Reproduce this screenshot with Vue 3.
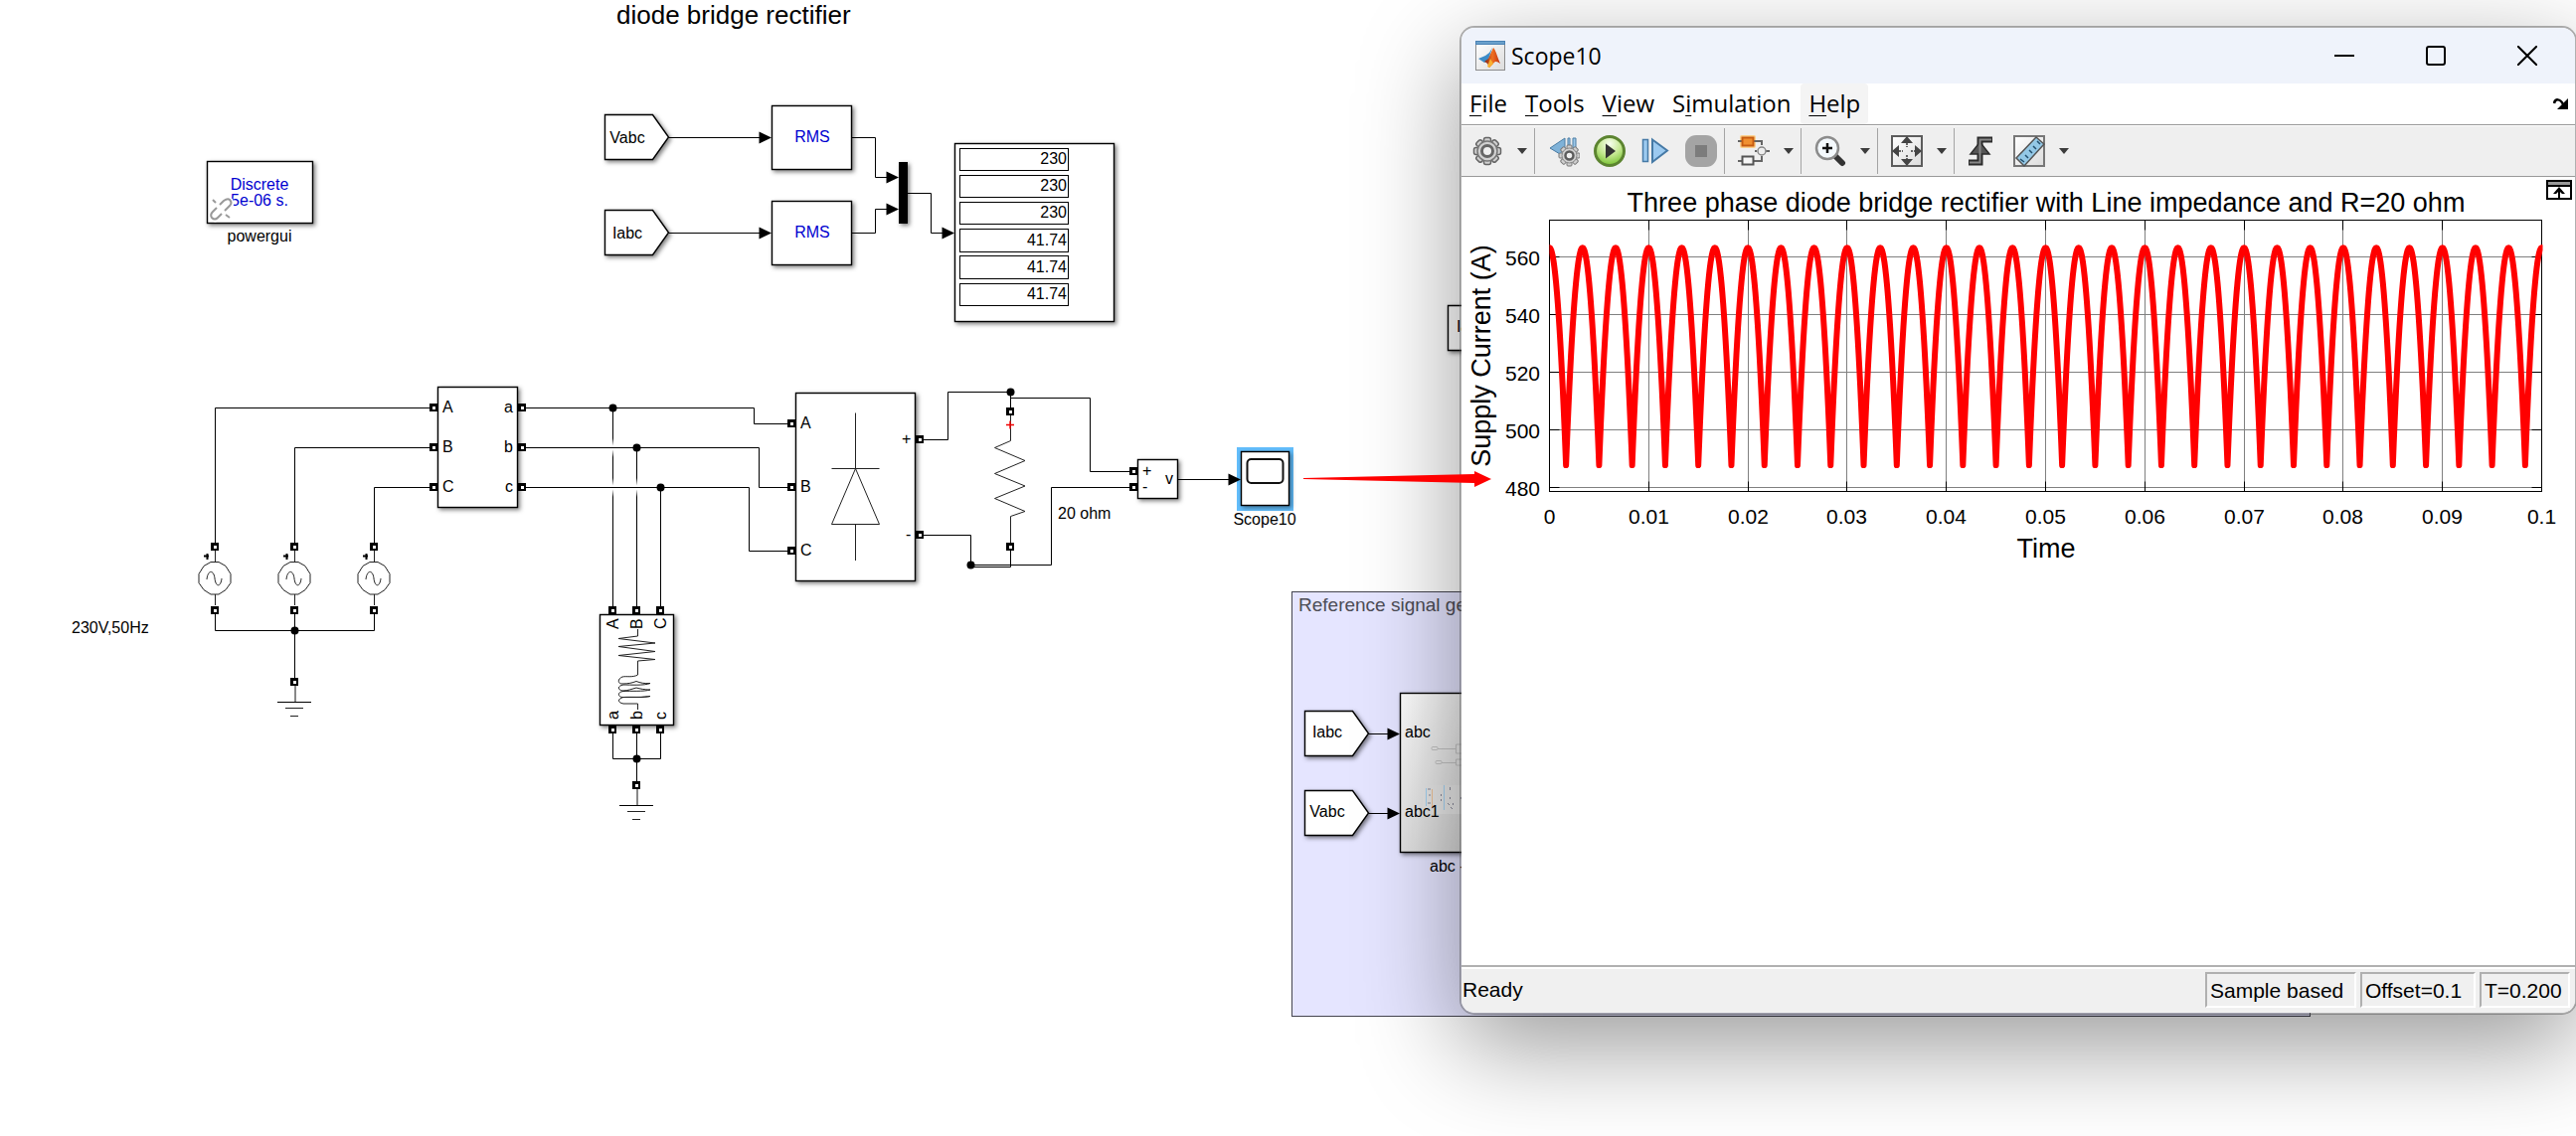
<script setup>
const blocks = [
  { x: 208, y: 162, w: 106, h: 62 },
  { x: 776, y: 106, w: 80, h: 64 },
  { x: 776, y: 202, w: 80, h: 64 },
  { x: 960, y: 144, w: 160, h: 179 },
  { x: 440, y: 389, w: 80, h: 121 },
  { x: 800, y: 395, w: 120, h: 189 },
  { x: 603, y: 618, w: 74, h: 111 },
  { x: 1144, y: 462, w: 40, h: 39 },
]

const tags = [
  { x: 608, y: 115, label: 'Vabc', tx: 631, ty: 144 },
  { x: 608, y: 211, label: 'Iabc', tx: 631, ty: 240 },
  { x: 1312, y: 715, label: 'Iabc', tx: 1335, ty: 742 },
  { x: 1312, y: 795, label: 'Vabc', tx: 1335, ty: 822 },
  { x: 1456, y: 307, label: 'Iabc', tx: 1480, ty: 334 },
]
const tagShape = (t) => `M${t.x + 0.5} ${t.y + 0.5}h48l16 22.5l-16 22.5h-48z`

const readings = [
  { y: 149, h: 22, v: '230', ty: 165 },
  { y: 176, h: 22, v: '230', ty: 192 },
  { y: 203, h: 22, v: '230', ty: 219 },
  { y: 230, h: 23, v: '41.74', ty: 247 },
  { y: 257, h: 23, v: '41.74', ty: 274 },
  { y: 285, h: 22, v: '41.74', ty: 301 },
]

const wires = [
  'M672 138.5H764', 'M672 234.5H764',
  'M857 138.5H880.5V178.5H892', 'M857 234.5H880.5V210.5H892',
  'M913 194.5H936.5V234.5H948',
  'M216.5 546V410.5H433', 'M296.5 546V450.5H433', 'M376.5 546V490.5H433',
  'M216.5 618V634.5H376.5V618', 'M296.5 618V682',
  'M528 410.5H758.5V426.5H793', 'M528 450.5H763.5V490.5H793', 'M528 490.5H753.5V554.5H793',
  'M664.5 490.5V610',
  'M616.5 738V763.5H664.5V738', 'M640.5 738V786',
  'M928 442.5H953.5V394.5H1016.5V410', 'M1016.5 400.5H1096.5V474.5H1137',
  'M928 538.5H976.5V568.5H1057.5V490.5H1137', 'M1016.5 554V570.5H976.5',
  'M1185 482.5H1236', 'M1376 738.5H1396', 'M1376 818.5H1396',
]

const arrows = [[776, 138], [776, 234], [904, 178], [904, 210], [960, 234], [1408, 738], [1408, 818]]
const dots = [[296.5, 634.5], [616.5, 410.5], [640.5, 450.5], [664.5, 490.5], [640.5, 763.5], [1016.5, 394.5], [976.5, 568.5]]

const ports = [
  [432, 406], [432, 446], [432, 486], [521, 406], [521, 446], [521, 486],
  [212, 546], [292, 546], [372, 546], [212, 610], [292, 610], [372, 610], [292, 682],
  [792, 422], [792, 486], [792, 550], [921, 438], [921, 534],
  [612, 610], [636, 610], [660, 610], [612, 730], [636, 730], [660, 730], [636, 786],
  [1012, 410], [1012, 546], [1136, 470], [1136, 486],
]

const labels = [
  [445, 415, 'A'], [445, 455, 'B'], [445, 495, 'C'], [507, 415, 'a'], [507, 455, 'b'], [508, 495, 'c'],
  [805, 431, 'A'], [805, 495, 'B'], [805, 559, 'C'], [907, 447, '+'], [911, 543, '-'],
  [1149, 479, '+'], [1149, 495, '-'], [1172, 487, 'v'],
  [72, 637, '230V,50Hz'], [1064, 522, '20 ohm'],
]
const sideLabels = [[622, 633, 'A'], [646, 633, 'B'], [670, 633, 'C'], [622, 724, 'a'], [646, 724, 'b'], [670, 724, 'c']]
const sources = [216, 296, 376]
const grounds = [[296, 690], [640, 794]]

const menus = [
  ['', 'F', 'ile'], ['', 'T', 'ools'], ['', 'V', 'iew'], ['S', 'i', 'mulation'], ['', 'H', 'elp'],
]
const toolGroups = [
  { icons: ['gear'], menu: true },
  { icons: ['setup', 'play', 'step', 'stop'], menu: false },
  { icons: ['signals'], menu: true },
  { icons: ['zoom'], menu: true },
  { icons: ['fit'], menu: true },
  { icons: ['trigger', 'ruler'], menu: true },
]
const toolNames = {
  gear: 'Configuration', setup: 'Stepping options', play: 'Run', step: 'Step forward', stop: 'Stop',
  signals: 'Signal selector', zoom: 'Zoom in', fit: 'Scale axes', trigger: 'Triggers', ruler: 'Measurements',
}
const gearTeeth = Array.from({ length: 8 }, (_, i) => i * 45)

// Plot geometry in the chart's own units
const left = 88.5
const right = 1086.5
const top = 43.5
const bottom = 316.5
const step = (right - left) / 10
const xTicks = Array.from({ length: 11 }, (_, i) => ({
  x: Math.round(left + i * step - 0.5) + 0.5,
  label: i === 0 ? '0' : i === 10 ? '0.1' : '0.0' + i,
}))
const yTicks = [560, 540, 520, 500, 480].map((v, i) => ({ v, y: 80.5 + i * 58 }))

// Six-pulse rectified voltage: tops of a cosine, 60 degrees per pulse
const points = []
for (let i = 0; i <= 1200; i++) {
  const phase = (i / 1200) * 30
  const angle = (phase - Math.round(phase)) * (Math.PI / 3)
  const volts = 563.2 * Math.cos(angle)
  points.push(`${(left + (i / 1200) * (right - left)).toFixed(2)},${(80.5 - (volts - 560) * 2.9).toFixed(2)}`)
}
const trace = points.join(' ')
</script>

<template>
  <main class="desktop">
    <svg class="canvas" role="img" aria-label="Diode bridge rectifier model">
      <defs>
        <linearGradient id="hop" x1="0" y1="0" x2="0" y2="1">
          <stop offset="0" stop-color="#fff" stop-opacity="0" />
          <stop offset=".4" stop-color="#fff" />
          <stop offset=".6" stop-color="#fff" />
          <stop offset="1" stop-color="#fff" stop-opacity="0" />
        </linearGradient>
        <linearGradient id="sub" x1="0" y1="0" x2="1" y2="1">
          <stop offset="0" stop-color="#fff" />
          <stop offset="1" stop-color="#c4c4c4" />
        </linearGradient>
      </defs>

      <rect class="area" x="1299.5" y="595.5" width="1024" height="427" />
      <text class="area-title" x="1306" y="615">Reference signal generation</text>

      <path class="wire" d="M616.5 410.5V610M640.5 450.5V610" />
      <rect x="614" y="441" width="5" height="19" fill="url(#hop)" />
      <rect x="614" y="481" width="5" height="19" fill="url(#hop)" />
      <rect x="638" y="481" width="5" height="19" fill="url(#hop)" />
      <path v-for="d in wires" :key="d" class="wire" :d="d" />

      <g class="solid">
        <rect v-for="b in blocks" :key="b.x + '-' + b.y" :x="b.x + 0.5" :y="b.y + 0.5" :width="b.w" :height="b.h" />
        <path v-for="t in tags" :key="t.x + '-' + t.y" :d="tagShape(t)" />
        <rect x="1408.5" y="697.5" width="160" height="160" fill="url(#sub)" />
      </g>
      <rect class="mux" x="904" y="163" width="9" height="62" />

      <text v-for="t in tags" :key="'l' + t.x + t.y" class="mid" :x="t.tx" :y="t.ty">{{ t.label }}</text>

      <text class="heading" x="620" y="24">diode bridge rectifier</text>
      <text class="mid blue" x="817" y="143">RMS</text>
      <text class="mid blue" x="817" y="239">RMS</text>
      <text class="mid blue" x="261" y="191">Discrete</text>
      <text class="mid blue" x="261" y="207">5e-06 s.</text>
      <g class="link">
        <path class="halo" d="M221 207l5-5q4-3 6 0q2 3-1 6l-5 5M218 210l-4 4q-3 3 0 6q3 2 6-1l4-4" />
        <path d="M221 206l4-4q4-3 6-1q3 3 0 6l-5 5M218 209l-4 4q-3 3-1 6q3 3 6 0l4-4M214 201l3 3M227 216l4 3" />
      </g>
      <text class="mid" x="261" y="243">powergui</text>

      <g v-for="r in readings" :key="r.y">
        <rect class="cell" x="965.5" :y="r.y + 0.5" width="109" :height="r.h" />
        <text class="end" x="1073" :y="r.ty">{{ r.v }}</text>
      </g>

      <path v-for="a in arrows" :key="a.join()" :d="`M${a[0]} ${a[1] + 0.5}l-12.500-6v12z`" />
      <circle v-for="d in dots" :key="d.join()" :cx="d[0]" :cy="d[1]" r="4" />

      <g v-for="x in sources" :key="x" class="thin">
        <path :d="`M${x + 0.5} 554V565M${x + 0.5} 598V609`" />
        <path :d="`M${x - 4} 565.500h8l7 4l5 8v9l-5 7l-7 4.500h-8l-7-4.500l-5-7v-9l5-8z`" />
        <path :d="`M${x - 8} 583c1-10 7-10 8-1c1 9 6 9 7 0`" />
        <path :d="`M${x - 11} 559.500h5M${x - 7.5} 557v6`" class="bold" />
      </g>

      <g v-for="g in grounds" :key="g.join()">
        <path class="stem" :d="`M${g[0] + 1} ${g[1]}v16`" />
        <path class="wire" :d="`M${g[0] - 17} ${g[1] + 16.5}h34`" />
        <path class="thin" :d="`M${g[0] - 9} ${g[1] + 22.5}h18M${g[0] - 4} ${g[1] + 30.5}h8`" />
      </g>

      <path class="thin" d="M860.500 415.500V471.500M836.500 471.500H884.500M860.500 471.500L836.500 527.500H884.500ZM860.500 527.500V564" />
      <path class="thin" d="M641.500 633V640L622 642.500L659 647L622 650.500L659 655.500L622 659.500L659 663.500L641.500 665V679C636 682 630 680 626 681C621 683 621 688 626 688C632 688 636 687 640 685.500C644 687 648 688 654 687.500C648 690 634 689 627 689C621 690 621 694 626 695C632 695 636 693 640 692C644 693 648 694 654 694C648 696 634 695 627 695.500C621 696 621 701 626 701.500H645L654 700.500C648 702 634 701 627 701.500C621 703 621 707 627 708H641.500V714" />
      <path class="thin" d="M1016.500 418V443.500L1000.500 450.500L1031 463.500L1000.500 476.500L1031 489L1000.500 501.500L1031 514.500L1016.500 519.500V546" />
      <path class="plus" d="M1012 427.500h8M1016 423.500v8" />

      <g v-for="p in ports" :key="p.join()">
        <rect :x="p[0]" :y="p[1]" width="8" height="8" />
        <rect :x="p[0] + 3" :y="p[1] + 3" width="3" height="3" fill="#fff" />
      </g>

      <text v-for="l in labels" :key="l.join()" :x="l[0]" :y="l[1]">{{ l[2] }}</text>
      <text v-for="l in sideLabels" :key="l.join()" :transform="`translate(${l[0]} ${l[1]}) rotate(-90)`">{{ l[2] }}</text>

      <rect x="1244" y="450" width="57" height="64" fill="#62bdfb" />
      <rect class="scope" x="1248.5" y="454.500" width="48" height="54" />
      <rect class="screen" x="1254.500" y="462" width="36" height="24" rx="4" />
      <path d="M1248 482.500l-12.500-6v12z" />
      <text class="mid" x="1272" y="528">Scope10</text>

      <text x="1413" y="742">abc</text>
      <g class="preview">
        <rect x="1440" y="751.500" width="6" height="3" rx="1" />
        <path d="M1446 753.500H1464M1450 767.500H1464M1464.500 749v9h8v-9zM1464.500 764v6h8v-6z" />
        <rect x="1444" y="765.500" width="6" height="3" rx="1" />
        <rect class="sheet" x="1431" y="790" width="40" height="29" />
        <path d="M1434.500 793v18M1452.500 790v25" stroke="#a4d4f4" />
        <path d="M1440.500 794v19" stroke="#f0c498" />
        <path class="specks" d="M1436 794h3M1437 800h2M1436 808h3M1449.500 799v2M1449.500 804v2M1458.500 792v3M1458.500 802v2M1456 808l2 2M1459 812l2 2M1461.500 808v2M1469.500 802v2" />
      </g>
      <text x="1413" y="822">abc1</text>
      <text x="1438" y="877">abc - dq</text>
    </svg>

    <section class="window" aria-label="Scope10">
      <header class="titlebar">
        <svg class="app-icon" viewBox="0 0 30 30" aria-hidden="true">
          <defs>
            <linearGradient id="paper" x1="0" y1="0" x2="1" y2="1">
              <stop offset="0" stop-color="#fff" /><stop offset="1" stop-color="#dcdcdc" />
            </linearGradient>
            <linearGradient id="peak" x1="0" y1="0" x2="1" y2="0">
              <stop offset="0" stop-color="#7c1c14" /><stop offset=".5" stop-color="#f07020" /><stop offset="1" stop-color="#c03010" />
            </linearGradient>
          </defs>
          <rect x=".5" y=".5" width="29" height="29" fill="url(#paper)" stroke="#8c8c8c" />
          <rect x="0" y="0" width="30" height="4" fill="#4a82b4" />
          <path d="M1 2h28" stroke="#8cc0e4" />
          <path d="M3 18l7-3l4-3l3-5l-4 12l-4 3z" fill="#3c8cc8" />
          <path d="M9 21l4-3l5-11c2 1 4 9 7 16c-3-2-5-3-7 0l-4 4c-1-3-2-5-5-6z" fill="url(#peak)" />
          <path d="M12 26l3-8l3 5l-4 4z" fill="#f8b030" />
        </svg>
        <h1>Scope10</h1>
        <div class="controls">
          <button type="button" aria-label="Minimize"><svg viewBox="0 0 20 20"><path d="M0 10h20" /></svg></button>
          <button type="button" aria-label="Maximize"><svg viewBox="0 0 20 20"><rect x="1" y="1" width="18" height="18" rx="2" /></svg></button>
          <button type="button" aria-label="Close"><svg viewBox="0 0 20 20"><path d="M0 0L20 20M20 0L0 20" /></svg></button>
        </div>
      </header>

      <nav class="menubar">
        <button v-for="m in menus" :key="m[2]" type="button" :class="{ hot: m[2] === 'elp' }">{{ m[0] }}<u>{{ m[1] }}</u>{{ m[2] }}</button>
        <svg class="dock" viewBox="0 0 16 12" aria-hidden="true">
          <path d="M1 5C2 0 7 0 10 6" fill="none" stroke="#000" stroke-width="2.500" />
          <path d="M15 0V11H4Z" />
        </svg>
      </nav>

      <div class="toolbar" role="toolbar" aria-label="Scope tools">
        <div v-for="g in toolGroups" :key="g.icons[0]" class="group">
          <button v-for="n in g.icons" :key="n" type="button" class="tool" :aria-label="toolNames[n]" :disabled="n === 'stop'">
            <svg v-if="n === 'gear'" viewBox="0 0 32 32">
              <g fill="#d0d0d0" stroke="#666" stroke-width="1.500"><rect v-for="a in gearTeeth" :key="a" x="12.500" y="2.500" width="7" height="8" rx="2" :transform="`rotate(${a} 16 16)`" /></g>
              <circle cx="16" cy="16" r="10" fill="#d0d0d0" stroke="#777" stroke-width="1.500" />
              <circle cx="16" cy="16" r="5.500" fill="#efefef" stroke="#666" stroke-width="3" />
            </svg>
            <svg v-else-if="n === 'setup'" viewBox="0 0 32 32">
              <path d="M17 3V22L2 13Z" fill="#7fb2d8" stroke="#4a7ca4" />
              <path d="M20 3h2v10h-2zM25 3h3v10h-3z" fill="#9cc8e8" stroke="#4a7ca4" />
              <g fill="#d0d0d0" stroke="#777"><rect v-for="a in gearTeeth" :key="a" x="19" y="10" width="5" height="6" rx="1" :transform="`rotate(${a} 21.500 20.500)`" /></g>
              <circle cx="21.500" cy="20.500" r="7.500" fill="#d0d0d0" stroke="#888" />
              <circle cx="21.500" cy="20.500" r="4" fill="#efefef" stroke="#5c5c5c" stroke-width="2.500" />
            </svg>
            <svg v-else-if="n === 'play'" viewBox="0 0 32 32">
              <defs>
                <radialGradient id="green" cx=".5" cy=".25" r=".8">
                  <stop offset="0" stop-color="#f8fff0" /><stop offset=".5" stop-color="#c4e890" /><stop offset="1" stop-color="#6cbc24" />
                </radialGradient>
              </defs>
              <circle cx="16" cy="16" r="14.500" fill="url(#green)" stroke="#5c8430" stroke-width="3" />
              <path d="M12 8.500L22 16L12 23.500Z" fill="#333" />
            </svg>
            <svg v-else-if="n === 'step'" viewBox="0 0 32 32">
              <rect x="3.500" y="4.500" width="5" height="22" fill="#9ccaf0" stroke="#467aa6" stroke-width="1.500" />
              <path d="M13 4.500L28 15.500L13 27Z" fill="#9ccaf0" stroke="#467aa6" stroke-width="2" />
            </svg>
            <svg v-else-if="n === 'stop'" viewBox="0 0 32 32">
              <rect width="32" height="32" rx="11" fill="#a4a4a4" />
              <rect x="10" y="10" width="12" height="12" fill="#7c7c7c" />
            </svg>
            <svg v-else-if="n === 'signals'" viewBox="0 0 32 32">
              <rect x="2" y="0" width="16" height="13" rx="2" fill="#fcd08c" />
              <path d="M0 6h24v4M0 26h24v-5" fill="none" stroke="#666" stroke-width="2" />
              <rect x="4.500" y="2.500" width="11" height="8" fill="#f09030" stroke="#c85c10" stroke-width="2" />
              <rect x="4.500" y="21.500" width="11" height="8" fill="#f6f6f6" stroke="#555" stroke-width="2" />
              <path d="M19 16h-2M28 16h4" stroke="#666" stroke-width="2" />
              <circle cx="24" cy="16" r="4" fill="#eee" stroke="#888" stroke-width="1.500" />
            </svg>
            <svg v-else-if="n === 'zoom'" viewBox="0 0 32 32">
              <path d="M20 20L28 28" stroke="#333" stroke-width="6" stroke-linecap="round" />
              <circle cx="13" cy="13" r="11" fill="#f4f9fd" stroke="#8c8c8c" stroke-width="2.500" />
              <path d="M8 13h10M13 8v10" stroke="#111" stroke-width="2.500" />
            </svg>
            <svg v-else-if="n === 'fit'" viewBox="0 0 32 32">
              <rect x="1" y="1" width="30" height="30" fill="url(#paper)" stroke="#5c5c5c" stroke-width="2" />
              <path d="M16 1l6 7H10zM16 31l6-7H10zM1 16l7-6v12zM31 16l-7-6v12z" fill="#444" />
              <path d="M16 8v4M16 20v4M8 16h4M20 16h4" stroke="#666" stroke-width="2" stroke-dasharray="2 1" />
            </svg>
            <svg v-else-if="n === 'trigger'" viewBox="0 0 32 32">
              <path d="M1 27.500H12.500V4.500H25" fill="none" stroke="#2c2c2c" stroke-width="6" />
              <path d="M3 19L12.500 7L22 19Z" fill="#555" stroke="#2c2c2c" stroke-width="1.500" />
              <path d="M2 27.500H12.500V4.500H24" fill="none" stroke="#888" stroke-width="2" />
            </svg>
            <svg v-else viewBox="0 0 32 32">
              <rect x="1" y="1" width="30" height="30" fill="url(#paper)" stroke="#777" stroke-width="2" />
              <path d="M3 23L23 2L31 9L11 31Z" fill="#94c8e6" stroke="#555" stroke-width="1.500" />
              <path d="M11 27l-4-3M15 23l-3-3M19 18l-3-3M23 14l-3-3M27 9l-3-3" stroke="#23506e" stroke-width="1.500" />
            </svg>
          </button>
          <button v-if="g.menu" type="button" class="more" :aria-label="toolNames[g.icons[0]] + ' menu'"></button>
        </div>
      </div>

      <div class="plot">
        <svg viewBox="0 0 1120 793" role="img" aria-label="Supply current over time">
          <defs>
            <clipPath id="frame"><rect :x="left" :y="top" :width="right - left + 1" :height="bottom - top" /></clipPath>
          </defs>
          <g class="grid">
            <path v-for="t in xTicks" :key="t.label" :d="`M${t.x} ${top}V${bottom}`" />
            <path v-for="t in yTicks" :key="t.v" :d="`M${left} ${t.y}H${right}`" />
          </g>
          <g class="axis">
            <rect :x="left" :y="top" :width="right - left" :height="bottom - top" />
            <path v-for="t in xTicks" :key="t.label" :d="`M${t.x} ${top}v10M${t.x} ${bottom}v-10`" />
            <path v-for="t in yTicks" :key="t.v" :d="`M${left} ${t.y}h10M${right} ${t.y}h-10`" />
          </g>
          <polyline class="trace" :points="trace" clip-path="url(#frame)" />
          <text v-for="t in xTicks" :key="t.label" class="tick mid" :x="t.x" y="349">{{ t.label }}</text>
          <text v-for="t in yTicks" :key="t.v" class="tick end" x="79" :y="t.y + 8">{{ t.v }}</text>
          <text class="caption mid" x="588" y="35">Three phase diode bridge rectifier with Line impedance and R=20 ohm</text>
          <text class="caption mid" x="588" y="383">Time</text>
          <text class="caption mid" transform="translate(29 180) rotate(-90)">Supply Current (A)</text>
          <g class="popout">
            <rect x="1092" y="4" width="24" height="18" fill="#fff" stroke="#000" stroke-width="2" />
            <path d="M1093 6.500h22" stroke="#999" stroke-width="3" />
            <path d="M1093 9h22M1104 11v11" stroke="#000" stroke-width="2" />
            <path d="M1104 10l6 7h-3l-3-3l-3 3h-3z" />
          </g>
        </svg>
      </div>

      <footer class="status">
        <span class="state">Ready</span>
        <span class="panel sample">Sample based</span>
        <span class="panel offset">Offset=0.1</span>
        <span class="panel time">T=0.200</span>
      </footer>
    </section>

    <svg class="pointer" viewBox="0 0 190 18" aria-hidden="true">
      <path d="M1 8L173 4V1L190 9L173 17V13L1 9Z" fill="#f00" />
    </svg>
  </main>
</template>

<style>
body {
  margin: 0;
  background: #fff;
}
</style>

<style scoped>
.desktop {
  position: relative;
  min-height: 100vh;
  overflow: hidden;
  background: #fff;
  color: #000;
  font-family: "Liberation Sans", Arial, sans-serif;
}
.canvas {
  position: absolute;
  inset: 0;
  width: 100%;
  height: 100%;
  font-size: 16px;
}
.mid { text-anchor: middle; }
.end { text-anchor: end; }
.heading { font-size: 26px; }
.blue { fill: #0000d0; }
.area { fill: #e5e5ff; stroke: #44444f; }
.area-title { font-size: 19px; fill: #4c4c55; }
.wire { fill: none; stroke: #000; }
.thin { fill: none; stroke: #222; }
.bold { stroke: #000; stroke-width: 2; }
.stem { fill: none; stroke: #888; stroke-width: 2; }
.solid { fill: #fff; stroke: #000; stroke-width: 1.4; filter: drop-shadow(2px 2px 2px rgba(0, 0, 0, 0.5)); }
.mux { filter: drop-shadow(2px 2px 2px rgba(0, 0, 0, 0.5)); }
.cell { fill: #fff; stroke: #000; }
.link { fill: none; stroke: #999; stroke-width: 2; }
.halo { stroke: #fff; stroke-width: 5; }
.plus { stroke: #f00000; stroke-width: 1.4; }
.scope { fill: #fff; stroke: #000; stroke-width: 1.4; filter: drop-shadow(2px 2px 2px rgba(0, 0, 0, 0.4)); }
.screen { fill: #fff; stroke: #111; stroke-width: 2; }
.preview { fill: none; stroke: #c4c4c4; }
.preview .sheet { fill: #e9e9e9; stroke: none; }
.preview .specks { stroke: #889; }

.window {
  position: absolute;
  top: 26px;
  left: 1468px;
  right: -1px;
  display: flex;
  flex-direction: column;
  box-sizing: border-box;
  overflow: hidden;
  border: 2px solid rgba(80, 80, 80, 0.45);
  border-radius: 15px;
  background: #fff;
  background-clip: padding-box;
  box-shadow: 0 32px 100px rgba(0, 0, 0, 0.4);
}
.window button {
  padding: 0;
  border: 0;
  background: none;
  color: inherit;
  font: inherit;
}
.titlebar {
  display: flex;
  align-items: center;
  height: 56px;
  padding-left: 14px;
  background: #eff3fb;
  font-family: "Open Sans", "Noto Sans", sans-serif;
}
.app-icon { width: 30px; height: 30px; }
h1 {
  margin: 0 0 0 6px;
  font-size: 23px;
  font-weight: 400;
  line-height: 32px;
}
.controls { display: flex; height: 100%; margin: 0 2px 0 auto; }
.controls button { display: grid; place-items: center; width: 92px; }
.controls svg {
  width: 20px;
  height: 20px;
  fill: none;
  stroke: #000;
  stroke-width: 2;
}
.menubar {
  display: flex;
  align-items: center;
  gap: 2px;
  height: 41px;
  border-bottom: 1px solid #999;
  font-family: "Open Sans", "Noto Sans", sans-serif;
  font-size: 24px;
}
.window .menubar button { height: 100%; padding: 0 8px 2px; line-height: 38px; }
.window .menubar .hot { border-radius: 4px; background: #f4f4f4; }
u { text-decoration-thickness: 1px; text-underline-offset: 3px; }
.dock { width: 16px; height: 12px; margin: 0 6px 0 auto; }
.toolbar {
  display: flex;
  align-items: center;
  height: 50px;
  padding-left: 3px;
  border-top: 1px solid #fff;
  border-bottom: 1px solid #999;
  background: #efefef;
}
.group { display: flex; align-items: center; height: 46px; }
.group + .group { padding-left: 6px; border-left: 1px solid #a4a4a4; }
.tool { display: grid; place-items: center; width: 46px; height: 40px; }
.tool svg { width: 32px; height: 32px; }
.more { display: grid; place-items: center; width: 24px; height: 40px; }
.more::before {
  content: "";
  border: 5px solid transparent;
  border-top: 6px solid #3c3c3c;
  border-bottom: 0;
}
.plot svg { display: block; width: 100%; height: auto; }
.grid { fill: none; stroke: #808080; }
.axis { fill: none; stroke: #000; }
.trace { fill: none; stroke: #f00; stroke-width: 6; stroke-linejoin: round; stroke-linecap: round; }
.tick { font-size: 21px; }
.caption { font-size: 27px; }
.status {
  display: flex;
  align-items: center;
  gap: 4px;
  height: 46px;
  padding-right: 5px;
  border-top: 2px solid #b0b0b0;
  background: #f0f0f0;
  box-shadow: inset 0 2px #fff;
  font-size: 21px;
  line-height: 34px;
}
.state { flex: 1; padding-left: 1px; }
.panel {
  box-sizing: border-box;
  height: 36px;
  padding-left: 3px;
  border: 2px solid;
  border-color: #b0b0b0 #fff #fff #b0b0b0;
  white-space: nowrap;
}
.sample { width: 152px; }
.offset { width: 116px; }
.time { width: 91px; }
.pointer {
  position: absolute;
  top: 473px;
  left: 1310px;
  width: 190px;
  height: 18px;
}
</style>
